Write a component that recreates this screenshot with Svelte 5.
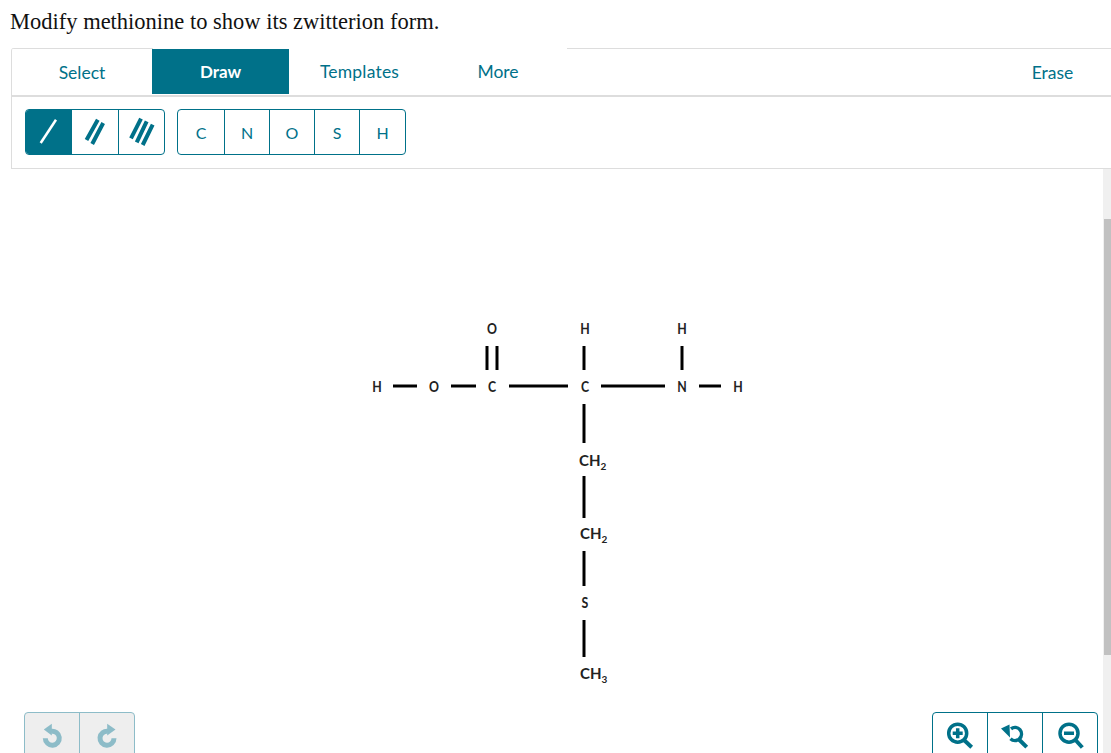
<script>
  const tabs = [
    { name: 'Select', cls: 'select' },
    { name: 'Draw', cls: 'draw active' },
    { name: 'Templates', cls: 'templates' },
    { name: 'More', cls: 'more' }
  ]
  const atoms = ['C', 'N', 'O', 'S', 'H']

  // bonds of the molecule, in canvas coordinates
  const bonds = [
    [393, 386, 417, 386],
    [451, 386, 476, 386],
    [509, 386, 568, 386],
    [601, 386, 665, 386],
    [699, 386, 721, 386],
    [487, 346, 487, 370],
    [497, 346, 497, 370],
    [584, 346, 584, 370],
    [682, 346, 682, 370],
    [584, 404, 584, 443],
    [584, 476, 584, 518],
    [584, 551, 584, 586],
    [584, 620, 584, 657]
  ]
  const labels = [
    ['O', 492, 334], ['H', 585, 334], ['H', 682, 334],
    ['H', 377, 392], ['O', 434, 392], ['C', 492, 392],
    ['C', 585, 392], ['N', 682, 392], ['H', 738, 392],
    ['S', 585, 608]
  ]
  const groups = [
    ['CH', '2', 579, 466],
    ['CH', '2', 580, 539],
    ['CH', '3', 580, 679]
  ]
</script>

<main>
  <p class="prompt">Modify methionine to show its zwitterion form.</p>

  <nav class="tabs">
    {#each tabs as tab (tab.name)}
      <button class="tab {tab.cls}">{tab.name}</button>
    {/each}
    <button class="tab erase">Erase</button>
  </nav>

  <div class="tools">
    <div class="group bondGroup">
      <button class="tool on" aria-label="single bond">
        <svg width="46" height="46" viewBox="0 0 46 46"><path d="M14.7 34 L30 10.7" /></svg>
      </button>
      <button class="tool" aria-label="double bond">
        <svg width="46" height="46" viewBox="0 0 46 46"><path class="thick" d="M14.5 31 L25.8 10.7 M20.2 35 L31.2 14" /></svg>
      </button>
      <button class="tool" aria-label="triple bond">
        <svg width="46" height="46" viewBox="0 0 46 46"><path class="thick" d="M12 29.3 L22 9.7 M17.7 33.3 L27.7 12.3 M23.7 36 L33.7 15.7" /></svg>
      </button>
    </div>
    <div class="group atomGroup">
      {#each atoms as atom (atom)}
        <button class="tool atom">{atom}</button>
      {/each}
    </div>
  </div>

  <section class="canvas">
    <svg class="molecule" width="1111" height="753" viewBox="0 0 1111 753">
      {#each bonds as b, i (i)}
        <line x1={b[0]} y1={b[1]} x2={b[2]} y2={b[3]} />
      {/each}
      {#each labels as l, i (i)}
        <text class="atomLabel" x={l[1]} y={l[2]} text-anchor="middle">{l[0]}</text>
      {/each}
      {#each groups as g, i (i)}
        <text x={g[2]} y={g[3]} class="ch">{g[0]}<tspan class="sub" dy="4">{g[1]}</tspan></text>
      {/each}
    </svg>

    <div class="bottom">
      <div class="group undoGroup">
        <button class="foot off" aria-label="undo">
          <svg width="24" height="24" viewBox="0 0 24 24">
            <path class="arc" d="M11 6.3 A7 7 0 1 1 5.3 13.2" />
            <path class="head" d="M11.8 -1.2 L11.8 10.5 L3.8 4.5 Z" />
          </svg>
        </button>
        <button class="foot off" aria-label="redo">
          <svg width="24" height="24" viewBox="0 0 24 24">
            <path class="arc" d="M13 6.3 A7 7 0 1 0 19 13.2" />
            <path class="head" d="M12.2 -1.2 L12.2 10.5 L20.5 4.5 Z" />
          </svg>
        </button>
      </div>
      <div class="group zoomGroup">
        <button class="foot" aria-label="zoom in">
          <svg width="28" height="28" viewBox="0 0 28 28">
            <circle class="ring" cx="11.7" cy="10.2" r="9" />
            <path class="handle" d="M18 17 L25.7 24.2" />
            <path class="mark" d="M6.7 10.2 H16.7 M11.7 5.2 V15.2" />
          </svg>
        </button>
        <button class="foot" aria-label="reset zoom">
          <svg width="28" height="28" viewBox="0 0 28 28">
            <path class="ringOpen" d="M10 5.8 A6.5 6.5 0 1 1 9.5 15.7" />
            <path class="handle" d="M18 16.5 L25.7 24.2" />
            <path class="tip" d="M0 5.5 L8.5 1.5 L9 14.5 Z" />
          </svg>
        </button>
        <button class="foot" aria-label="zoom out">
          <svg width="28" height="28" viewBox="0 0 28 28">
            <circle class="ring" cx="13" cy="10.2" r="9" />
            <path class="handle" d="M19.5 17 L26.3 24.5" />
            <path class="mark" d="M8 10.2 H18" />
          </svg>
        </button>
      </div>
    </div>

    <div class="scrollbar"><div class="thumb"></div></div>
  </section>
</main>

<style>
  :global(body) {
    overflow: hidden;
  }

  main {
    width: 1111px;
    height: 753px;
    overflow: hidden;
    display: flex;
    flex-direction: column;
    font-family: Lato, "Open Sans", sans-serif;
    color: #007189;
  }

  .prompt {
    margin: 0;
    height: 48px;
    padding: 9px 0 0 10px;
    box-sizing: border-box;
    font-family: "Liberation Serif", serif;
    font-size: 22.5px;
    line-height: 26px;
    color: #111;
  }

  button {
    font-family: inherit;
    color: inherit;
    background: none;
    border: 0;
    padding: 0;
    margin: 0;
  }

  .tabs {
    display: flex;
    height: 49px;
    margin-left: 11px;
    box-sizing: border-box;
    border-bottom: 2px solid #ddd;
    border-left: 1px solid #ddd;
    border-top-left-radius: 3px;
    background:
      linear-gradient(#ddd, #ddd) 0 0 / 141px 1px no-repeat,
      linear-gradient(#ddd, #ddd) 555px 0 / 100% 1px no-repeat;
  }

  .tab {
    font-size: 17.5px;
    height: 47px;
    padding: 0;
  }

  .select { width: 140px; padding-top: 1px; }
  .draw { width: 137px; margin-top: 1px; height: 45px; }
  .templates { width: 141px; letter-spacing: 0.2px; }
  .more { width: 136px; }
  .erase { margin-left: auto; width: 117px; padding-top: 1px; }

  .active {
    background: #007189;
    color: #fff;
    font-weight: 700;
    font-size: 17px;
  }

  .tools {
    display: flex;
    gap: 12px;
    margin-left: 11px;
    height: 72px;
    padding: 12px 0 0 13px;
    box-sizing: border-box;
    border-left: 1px solid #ddd;
    border-bottom: 1px solid #ddd;
  }

  .group {
    display: flex;
    border: 1px solid #007189;
    border-radius: 4px;
    box-sizing: border-box;
    overflow: hidden;
  }

  .bondGroup { width: 140px; height: 46px; }
  .atomGroup { width: 229px; height: 46px; }

  .tool {
    flex: 0 0 45px;
    display: flex;
    align-items: center;
    justify-content: center;
    border-left: 1px solid #007189;
  }

  .tool:first-child { border-left: 0; flex-basis: 46px; }
  .tool:last-child { flex: 1 1 0; }
  .on + .tool { border-left: 0; }
  .tool svg { fill: none; stroke: #007189; stroke-width: 2; flex: none; }
  .tool .thick { stroke-width: 4; }

  .on {
    background: #007189;
  }

  .tool.on svg { stroke: #fff; stroke-width: 2.5; }

  .atom { font-size: 16px; }

  .canvas {
    flex: 1;
    position: relative;
  }

  .molecule {
    position: absolute;
    left: 0;
    top: -169px;
  }

  .molecule line {
    stroke: #000;
    stroke-width: 3;
  }

  .molecule text {
    font-family: Lato, sans-serif;
    font-weight: 700;
    fill: #222;
  }

  .molecule .atomLabel {
    font-size: 14.5px;
    transform-box: fill-box;
    transform-origin: center;
    transform: scaleX(0.85);
  }

  .molecule .ch { font-size: 15px; }
  .molecule .sub { font-size: 10px; }

  .bottom {
    position: absolute;
    left: 24px;
    top: 543px;
    width: 1074px;
    display: flex;
    justify-content: space-between;
  }

  .undoGroup {
    width: 111px;
    height: 60px;
    border-color: #8dbcc8;
    background: #eee;
  }

  .zoomGroup {
    width: 166px;
    height: 60px;
  }

  .foot {
    flex: 1;
    height: 47px;
    display: flex;
    align-items: center;
    justify-content: center;
    border-left: 1px solid #007189;
  }

  .foot svg { overflow: visible; flex: none; }
  .foot:first-child { border-left: 0; }
  .foot.off { border-color: #8dbcc8; }

  .off .arc { fill: none; stroke: #8dbcc8; stroke-width: 5; }
  .off .head { fill: #8dbcc8; }

  .ring { fill: none; stroke: #007189; stroke-width: 3.5; }
  .ringOpen { fill: none; stroke: #007189; stroke-width: 3.5; }
  .handle { stroke: #007189; stroke-width: 4; }
  .mark { stroke: #007189; stroke-width: 3.5; }
  .tip { fill: #007189; }

  .scrollbar {
    position: absolute;
    right: 0;
    top: 0;
    bottom: 0;
    width: 8px;
    background: #f0f0f0;
  }

  .thumb {
    margin-top: 50px;
    height: 436px;
    margin-left: 1px;
    background: #c1c1c1;
  }
</style>
